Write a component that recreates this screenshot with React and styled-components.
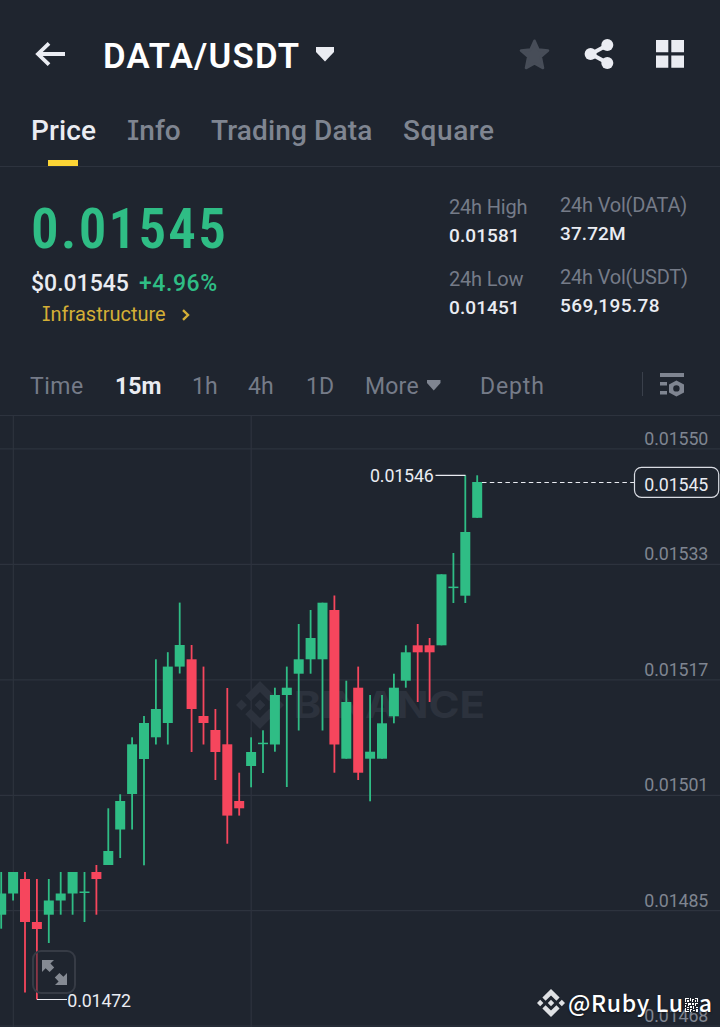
import React from "react";
import styled, { createGlobalStyle } from "styled-components";

const c = {
  bg: "#1f252f",
  line: "#2d333e",
  text: "#eaecf2",
  muted: "#7f8591",
  faint: "#757b88",
  up: "#2fbd85",
  down: "#f6465d",
  yellow: "#fcd535",
};

const GlobalStyle = createGlobalStyle`
  * { box-sizing: border-box; }
  body { margin: 0; background: ${c.bg}; }
`;

const Page = styled.main`
  width: 720px;
  height: 1027px;
  overflow: hidden;
  display: flex;
  flex-direction: column;
  background: ${c.bg};
  color: ${c.text};
  font-family: Roboto, "Liberation Sans", sans-serif;
  white-space: nowrap;
`;

const Header = styled.header`
  height: 108px;
  padding: 0 36px 0 34px;
  display: flex;
  align-items: center;
`;

const Pair = styled.h1`
  margin: 4px 16px 0 36px;
  font-size: 34.7px;
  line-height: 44px;
  font-weight: 600;
  letter-spacing: 1.25px;
  color: #fff;
`;

const HeaderActions = styled.div`
  margin-left: auto;
  display: flex;
  align-items: center;
  gap: 34px;
`;

const Tabs = styled.nav`
  height: 59px;
  padding-left: 31px;
  display: grid;
  grid-template-columns: 96px 84px 192px 1fr;
  border-bottom: 1px solid ${c.line};
`;

const Tab = styled.div`
  display: flex;
  flex-direction: column;
  justify-content: space-between;
  width: max-content;
  font-size: 28px;
  line-height: 45px;
  font-weight: 500;
  letter-spacing: ${(p) => p.$spacing || 0}px;
  color: ${(p) => (p.$active ? c.text : c.muted)};
`;

const TabMark = styled.span`
  width: 30px;
  height: 6px;
  margin-left: 17px;
  background: ${c.yellow};
`;

const SlabI = styled.span`
  font-family: Inter, sans-serif;
  font-size: 0.97em;
  line-height: 1;
  font-feature-settings: "cv08" 1;
`;

const Summary = styled.section`
  height: 190px;
  display: grid;
  grid-template-columns: 449px 111px 1fr;
`;

const PriceBlock = styled.div`
  padding: 34px 0 0 31px;
`;

const LastPrice = styled.div`
  font-size: 55px;
  line-height: 56px;
  font-weight: 600;
  font-stretch: 87%;
  letter-spacing: 2.2px;
  color: ${c.up};
`;

const SubPrice = styled.div`
  padding-top: 13px;
  display: flex;
  gap: 10px;
  font-size: 23px;
  line-height: 28px;
  font-weight: 500;
`;

const Change = styled.span`
  letter-spacing: 0.6px;
  color: ${c.up};
`;

const Sector = styled.div`
  padding-left: 11px;
  display: flex;
  align-items: center;
  gap: 16px;
  font-size: 20px;
  line-height: 33px;
  color: #d4af36;
`;

const StatColumn = styled.dl`
  margin: 0;
  padding-top: ${(p) => p.$top}px;
`;

const Stat = styled.div`
  margin-bottom: 15px;
`;

const StatLabel = styled.dt`
  font-size: 20px;
  line-height: 28px;
  letter-spacing: -0.2px;
  color: ${c.faint};
`;

const StatValue = styled.dd`
  margin: 0;
  font-size: 19px;
  line-height: 29px;
  font-weight: 500;
  letter-spacing: ${(p) => p.$spacing || 0.1}px;
`;

const Intervals = styled.nav`
  height: 59px;
  padding-left: 30px;
  display: grid;
  grid-template-columns: 85px 77px 56px 58px 59px 115px 162px 1fr;
  align-items: center;
  border-bottom: 1px solid ${c.line};
`;

const Interval = styled.div`
  padding-top: 1px;
  display: flex;
  align-items: center;
  gap: 8px;
  font-size: 23px;
  line-height: 28px;
  font-weight: ${(p) => (p.$active ? 700 : 400)};
  letter-spacing: ${(p) => p.$spacing || 0}px;
  color: ${(p) => (p.$active ? c.text : c.faint)};

  svg { margin-top: -3px; }
`;

const ChartTools = styled.div`
  width: 43px;
  height: 24px;
  margin-bottom: 4px;
  padding-left: 17px;
  border-left: 1px solid #3a404b;
  display: flex;
`;

const ChartArea = styled.section`
  position: relative;
  height: 611px;
`;

const ChartSvg = styled.svg`
  display: block;
  font-family: Roboto, "Liberation Sans", sans-serif;
`;

const ExpandButton = styled.button`
  position: absolute;
  left: 32px;
  top: 534px;
  width: 44px;
  height: 44px;
  padding: 0;
  display: grid;
  place-items: center;
  border: 2px solid #363b45;
  border-radius: 9px;
  background: rgba(31, 37, 47, 0.5);
`;

const Credit = styled.div`
  position: absolute;
  left: 537px;
  top: 570px;
  display: flex;
  align-items: center;
  gap: 3px;
  color: #fff;
  font: 500 23px/32px "Noto Sans CJK SC", "Noto Sans", sans-serif;
  letter-spacing: 0.65px;
  text-shadow: 0 1px 2px rgba(0, 0, 0, 0.6);

  > svg:first-child { margin-top: 2px; }
`;

const CodeMark = styled.svg`
  position: absolute;
  left: 148px;
  top: 12px;
`;

// [high, body top, body bottom, low, rising]
const candles = [
  [872, 893.5, 914.7, 928.7, 1], [872, 872, 893.5, 900.5, 1], [872, 879, 922, 992.5, 0],
  [879, 922, 929, 999.5, 0], [879, 900.5, 914.7, 943, 1], [872, 893.5, 900.5, 914.7, 1],
  [872, 872, 893.5, 914.7, 1], [872, 891.5, 893, 922, 1], [865, 872, 879, 914.7, 0],
  [808.3, 851, 865, 865, 1], [794.3, 801, 829.5, 858, 1], [737.3, 744.3, 794, 829.5, 1],
  [716, 723, 759, 865.3, 1], [659.3, 709, 737.3, 744.5, 1], [652.2, 666.6, 723, 744.5, 1],
  [602.6, 645, 666.6, 673.5, 1], [645, 659.3, 709, 752, 0], [666.6, 716, 723, 744.5, 0],
  [709, 730, 752, 780, 0], [688, 744.3, 815.6, 843.7, 0], [772.7, 801, 808.3, 815.6, 0],
  [737.3, 752, 766, 787.3, 1], [730.3, 742.7, 744.2, 773, 1], [687.7, 695, 744.5, 751.7, 1],
  [666.6, 687.7, 695, 787, 1], [624, 659.3, 673.7, 730.5, 1], [610, 638, 659.3, 673.7, 1],
  [602.7, 602.7, 659.3, 730.5, 1], [595.5, 610, 744.5, 772.7, 0], [680.7, 702, 758.7, 758.7, 1],
  [666.6, 687.7, 772.7, 780, 0], [695, 751.7, 758.7, 801.3, 1], [695, 723.3, 758.7, 758.7, 1],
  [673.7, 687.7, 716.3, 723.3, 1], [645.3, 652.3, 680.7, 687.7, 1], [624, 645.3, 652.3, 702, 0],
  [638, 645.3, 652.3, 702, 0], [574.3, 574.3, 645.3, 645.3, 1], [553, 586.6, 588.1, 603, 1],
  [475.3, 532, 595.7, 603, 1], [475.3, 482, 517.8, 517.8, 1],
];

const gridRows = [448.8, 564.3, 679.8, 795.3, 910.6, 1026];
const axis = [
  ["0.01550", 445], ["0.01533", 560], ["0.01517", 676],
  ["0.01501", 791], ["0.01485", 907], ["0.01468", 1022],
];

function BrandMark({ x = 0, y = 0, size, fill }) {
  return (
    <svg x={x} y={y} width={size} height={size} viewBox="0 0 28 28" fill={fill}>
      <path d="M14 0 22.6 8.6 19.4 11.8 14 6.4 8.6 11.8 5.4 8.6Z" />
      <path d="M14 28 5.4 19.4 8.6 16.2 14 21.6 19.4 16.2 22.6 19.4Z" />
      <path d="M3.2 10.8 6.4 14 3.2 17.2 0 14ZM24.8 10.8 28 14 24.8 17.2 21.6 14ZM14 10.8 17.2 14 14 17.2 10.8 14Z" />
    </svg>
  );
}

function Candle({ index, data }) {
  const [high, top, bottom, low, rising] = data;
  const x = 1.2 + index * 11.9;
  const fill = rising ? c.up : c.down;
  return (
    <g fill={fill}>
      <rect x={x - 0.9} y={high} width="1.8" height={low - high} />
      <rect x={x - 5} y={top} width="10" height={bottom - top} />
    </g>
  );
}

function Chart() {
  return (
    <ChartSvg width="720" height="611" viewBox="0 416 720 611">
      <g stroke={c.line} strokeWidth="1.2">
        {gridRows.map((y) => <path key={y} d={`M0 ${y}H720`} />)}
        <path d="M13.3 416V1027M251.2 416V1027" />
      </g>
      <g>
        <BrandMark x={236} y={681} size={48} fill="#2c323d" />
        <text x="293.5" y="718" fontSize="37.5" fontWeight="700" fill="#2c323d" textLength="191.5" lengthAdjust="spacingAndGlyphs" fontFamily="Inter, sans-serif">BINANCE</text>
      </g>
      {candles.map((d, i) => <Candle key={i} index={i} data={d} />)}
      <g fontSize="17.8" fill={c.muted}>
        {axis.map(([label, y]) => <text key={label} x="644.3" y={y} textLength="64">{label}</text>)}
      </g>
      <path d="M482 482.5H634" stroke={c.text} strokeWidth="1.1" strokeDasharray="4.5 3.3" />
      <rect x="634.5" y="467.3" width="84.2" height="30" rx="7" fill={c.bg} stroke="#d9dce3" strokeWidth="1.2" />
      <g fontSize="17.8" fill={c.text}>
        <text x="644.3" y="491" textLength="64">0.01545</text>
        <text x="370" y="482" textLength="63.8">0.01546</text>
        <text x="67.3" y="1006.7" textLength="63.8">0.01472</text>
      </g>
      <path d="M435.5 475.4H465.5M37 999.5H67" stroke={c.text} strokeWidth="1.1" />
    </ChartSvg>
  );
}

export default function App() {
  return (
    <Page>
      <GlobalStyle />
      <Header>
        <svg width="33" height="28" viewBox="0 0 33 28" fill="none" stroke={c.text} strokeWidth="3.8">
          <path d="M15 3.4 4 14 15 24.6M4 14H31" />
        </svg>
        <Pair>DATA/USDT</Pair>
        <svg width="18" height="15" viewBox="0 0 18 15" fill={c.text}>
          <path d="M0 0H18V5L9 14.5 0 5Z" />
        </svg>
        <HeaderActions>
          <svg width="31" height="31" viewBox="0 0 31 31" fill="#474d58" stroke="#474d58" strokeWidth="2.6" strokeLinejoin="round">
            <path d="M15.5 1.8 19.4 10.6 29 11.5 21.8 17.9 24 29 15.5 24.4 7 29 9.2 17.9 2 11.5 11.6 10.6Z" />
          </svg>
          <svg width="31" height="32" viewBox="0 0 31 32" fill={c.text}>
            <path d="M23.5 7 7 16 23.5 25" fill="none" stroke={c.text} strokeWidth="4" />
            <circle cx="23.3" cy="7" r="6" />
            <circle cx="6.6" cy="16" r="6" />
            <circle cx="23.3" cy="25" r="6" />
          </svg>
          <svg width="35" height="28" viewBox="-7 0 35 28" fill={c.text}>
            <path d="M0 0H12.3V12.3H0ZM15.3 0H28V12.3H15.3ZM0 15.5H12.3V27.8H0ZM15.3 15.5H28V27.8H15.3Z" />
          </svg>
        </HeaderActions>
      </Header>

      <Tabs>
        <Tab $active $spacing={0.15}>Price<TabMark /></Tab>
        <Tab><span><SlabI>I</SlabI>nfo</span></Tab>
        <Tab $spacing={0.15}>Trading Data</Tab>
        <Tab $spacing={0.6}>Square</Tab>
      </Tabs>

      <Summary>
        <PriceBlock>
          <LastPrice>0.01545</LastPrice>
          <SubPrice>
            <span>$0.01545</span>
            <Change>+4.96%</Change>
          </SubPrice>
          <Sector>
            <span><SlabI>I</SlabI>nfrastructure</span>
            <svg width="8" height="12" viewBox="0 0 8 12" fill="none" stroke="#d4af36" strokeWidth="2.4">
              <path d="M1 1.2 6 6 1 10.8" />
            </svg>
          </Sector>
        </PriceBlock>
        <StatColumn $top={26}>
          <Stat><StatLabel>24h High</StatLabel><StatValue>0.01581</StatValue></Stat>
          <Stat><StatLabel>24h Low</StatLabel><StatValue>0.01451</StatValue></Stat>
        </StatColumn>
        <StatColumn $top={23.5}>
          <Stat><StatLabel>24h Vol(DATA)</StatLabel><StatValue>37.72M</StatValue></Stat>
          <Stat><StatLabel>24h Vol(USDT)</StatLabel><StatValue $spacing={0.4}>569,195.78</StatValue></Stat>
        </StatColumn>
      </Summary>

      <Intervals>
        <Interval $spacing={0.5}>Time</Interval>
        <Interval $active>15m</Interval>
        <Interval>1h</Interval>
        <Interval>4h</Interval>
        <Interval>1D</Interval>
        <Interval $spacing={0.2}>
          More
          <svg width="14" height="11" viewBox="0 0 14 11" fill={c.muted}><path d="M0 0H13.5V3L6.75 10.5 0 3Z" /></svg>
        </Interval>
        <Interval $spacing={0.85}>Depth</Interval>
        <ChartTools>
          <svg width="24" height="25" viewBox="0 0 24 25" fill={c.muted}>
            <path d="M0 1H24V5H0ZM0 10H7V13.5H0ZM0 19H7V22.5H0Z" />
            <path fillRule="evenodd" d="M16.4 8.5 24 12.6V20.4L16.4 24.5 9 20.4V12.6ZM16.4 13.2A3.2 3.2 0 1 0 16.4 19.6 3.2 3.2 0 1 0 16.4 13.2Z" />
          </svg>
        </ChartTools>
      </Intervals>

      <ChartArea>
        <Chart />
        <ExpandButton aria-label="Expand chart">
          <svg width="25" height="25" viewBox="0 0 25 25" fill="#858a93">
            <path d="M0 0H12L8.4 3.6 12.2 7.4 7.6 12 3.6 8.2 0 12Z" />
            <path d="M25 25H13L16.6 21.4 12.8 17.6 17.4 13 21.4 16.8 25 13Z" />
          </svg>
        </ExpandButton>
        <Credit>
          <BrandMark size={28} fill="#dfe1e4" />
          <span>@Ruby Luna</span>
          <CodeMark width="13" height="14" viewBox="0 0 13 14">
            <rect width="13" height="14" fill="#20252d" />
            <path fill="#fff" d="M0 0H4V1H1V4H0ZM2 2H4V4H2ZM5 0H6V3H5ZM7 1H9V2H8V4H7ZM10 0H13V4H12V1H10ZM10 2H11V4H10ZM0 5H2V6H0ZM3 5H6V7H4V8H3ZM7 5H9V7H7ZM10 5H13V6H11V8H10ZM0 7H1V9H0ZM2 9H4V10H2ZM5 8H7V10H5ZM8 8H9V11H8ZM11 9H13V10H11ZM0 10H1V13H4V14H0ZM2 11H4V12H2ZM5 11H7V12H6V14H5ZM8 12H10V13H8ZM11 11H13V14H11Z" />
          </CodeMark>
        </Credit>
      </ChartArea>
    </Page>
  );
}
